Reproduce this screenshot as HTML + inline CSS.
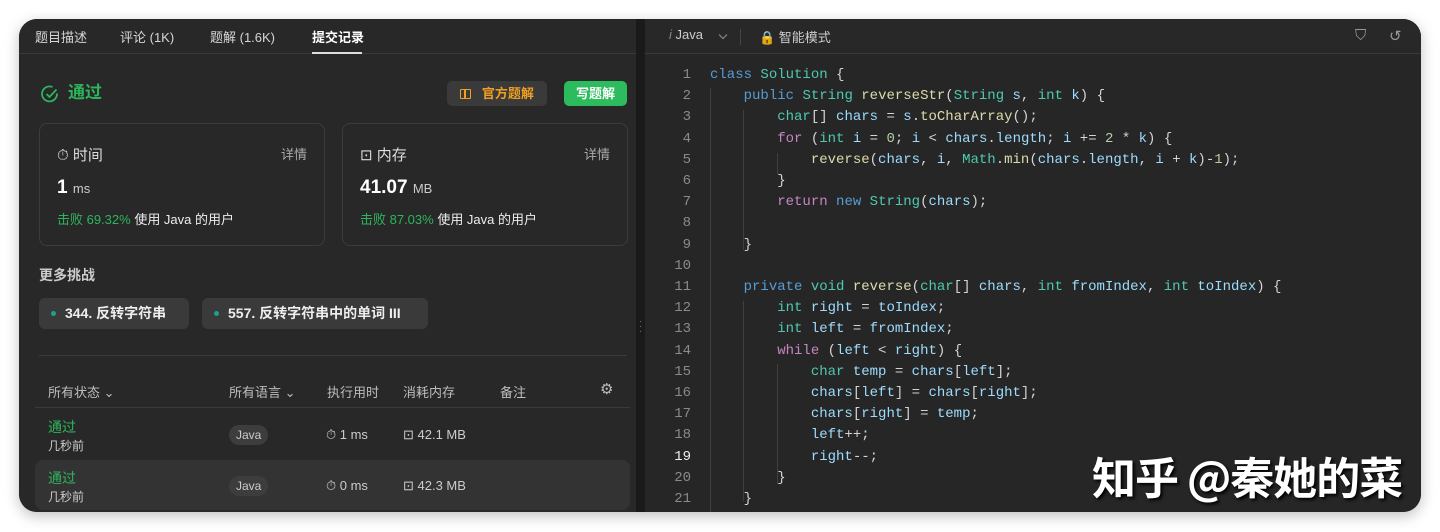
<!DOCTYPE html>
<html><head><meta charset="utf-8"><style>
*{box-sizing:border-box;margin:0;padding:0}
body{width:1440px;height:532px;background:#fff;overflow:hidden;font-family:"Liberation Sans","Noto Sans CJK SC",sans-serif;position:relative}
.win{position:absolute;left:19px;top:19px;width:1402px;height:493px;border-radius:18px;background:#1a1a1a;overflow:hidden;box-shadow:0 4px 14px rgba(0,0,0,.25)}
.lp{position:absolute;left:0;top:0;width:617px;height:493px;background:#282828}
.rp{position:absolute;left:626px;top:0;width:776px;height:493px;background:#262626}
.tabs{height:35px;border-bottom:1px solid #3a3a3a;position:relative;font-size:13px;color:#d6d6d6}
.tabs span{position:absolute;top:8px;white-space:nowrap}
.abs{position:absolute;white-space:nowrap}
.card{position:absolute;border:1px solid #3c3c3c;border-radius:8px;width:286px;height:123px;top:104px}
.g{color:#2db55d}
.code{position:absolute;left:0;top:46px;font-family:"Liberation Mono",monospace;font-size:14px;line-height:21.2px;color:#d4d4d4;white-space:pre}
.ln{position:absolute;left:0;width:46px;text-align:right;color:#8a8a8a}
.cl{position:absolute;left:65px}
.k{color:#569cd6}.t{color:#4ec9b0}.c{color:#c586c0}.f{color:#dcdcaa}.v{color:#9cdcfe}.n{color:#b5cea8}
.guide{position:absolute;width:1px;background:#404040}
.pill{position:absolute;background:#3a3a3a;border-radius:6px;color:#eee;font-size:14px;font-weight:bold;height:31px;line-height:31px;padding-left:26px}
.pill:before{content:"";position:absolute;left:12px;top:13px;width:5px;height:5px;border-radius:50%;background:#1aa38a}
.th{position:absolute;top:363px;font-size:13px;color:#bdbdbd}
.row{position:absolute;left:16px;width:595px;height:50px;border-radius:8px}
.jv{position:absolute;background:#3d3d3d;color:#ccc;font-size:12px;border-radius:10px;padding:3px 7px}
</style></head><body>
<div class="win">
 <div class="lp">
  <div class="tabs"><span style="left:16px">题目描述</span><span style="left:101px">评论 (1K)</span><span style="left:191px">题解 (1.6K)</span><span style="left:293px;color:#fff;font-weight:bold">提交记录</span>
   <div class="abs" style="left:293px;top:33px;width:50px;height:2px;background:#ddd"></div></div>
  <svg class="abs" style="left:21px;top:65px" width="20" height="20" viewBox="0 0 20 20"><path d="M17 9.5A7.5 7.5 0 1 1 12.5 3" fill="none" stroke="#2db55d" stroke-width="1.8"/><path d="M6.5 10l3 3 7-7.5" fill="none" stroke="#2db55d" stroke-width="1.8"/></svg>
  <div class="abs g" style="left:49px;top:63px;font-size:17px;font-weight:bold;line-height:22px">通过</div>
  <div class="abs" style="left:428px;top:62px;width:100px;height:25px;background:#3a3a3a;border-radius:5px;color:#f0a020;font-size:13px;font-weight:bold;line-height:25px;padding-left:13px"><span style="display:inline-block;width:11px;height:10px;border:1.5px solid #f0a020;border-radius:1px;vertical-align:-1px;position:relative"><span style="position:absolute;left:3px;top:-1px;width:1.5px;height:9px;background:#f0a020"></span></span>&nbsp;&nbsp; 官方题解</div>
  <div class="abs" style="left:545px;top:62px;width:63px;height:25px;background:#2cbb5d;border-radius:5px;color:#fff;font-size:13px;font-weight:bold;line-height:25px;text-align:center">写题解</div>
  <div class="card" style="left:20px">
   <div class="abs" style="left:17px;top:20px;color:#ddd;font-size:15px">⏱ 时间</div>
   <div class="abs" style="right:17px;top:20px;color:#aaa;font-size:13px">详情</div>
   <div class="abs" style="left:17px;top:53px;color:#fff;font-size:19px;font-weight:bold">1 <span style="font-size:13px;font-weight:normal;color:#ccc">ms</span></div>
   <div class="abs" style="left:17px;top:85px;font-size:13px;color:#eee"><span class="g">击败 69.32%</span> 使用 Java 的用户</div>
  </div>
  <div class="card" style="left:323px">
   <div class="abs" style="left:17px;top:20px;color:#ddd;font-size:15px">⊡ 内存</div>
   <div class="abs" style="right:17px;top:20px;color:#aaa;font-size:13px">详情</div>
   <div class="abs" style="left:17px;top:53px;color:#fff;font-size:19px;font-weight:bold">41.07 <span style="font-size:13px;font-weight:normal;color:#ccc">MB</span></div>
   <div class="abs" style="left:17px;top:85px;font-size:13px;color:#eee"><span class="g">击败 87.03%</span> 使用 Java 的用户</div>
  </div>
  <div class="abs" style="left:20px;top:246px;color:#ccc;font-size:14px;font-weight:bold">更多挑战</div>
  <div class="pill" style="left:20px;top:279px;width:150px">344. 反转字符串</div>
  <div class="pill" style="left:183px;top:279px;width:226px">557. 反转字符串中的单词 III</div>
  <div class="abs" style="left:20px;top:336px;width:588px;height:1px;background:#3a3a3a"></div>
  <div class="th" style="left:29px">所有状态 ⌄</div><div class="th" style="left:210px">所有语言 ⌄</div><div class="th" style="left:308px">执行用时</div><div class="th" style="left:384px">消耗内存</div><div class="th" style="left:481px">备注</div><div class="th" style="left:581px;font-size:15px;top:361px">⚙</div>
  <div class="abs" style="left:16px;top:388px;width:595px;height:1px;background:#3a3a3a"></div>
  <div class="row" style="top:390px"></div>
  <div class="row" style="top:441px;background:#333"></div>
  <div class="abs g" style="left:29px;top:398px;font-size:14px">通过</div><div class="abs" style="left:29px;top:418px;font-size:12px;color:#ccc">几秒前</div>
  <div class="jv" style="left:210px;top:406px">Java</div><div class="abs" style="left:307px;top:408px;font-size:13px;color:#ccc">⏱ 1 ms</div><div class="abs" style="left:384px;top:408px;font-size:13px;color:#ccc">⊡ 42.1 MB</div>
  <div class="abs g" style="left:29px;top:449px;font-size:14px">通过</div><div class="abs" style="left:29px;top:469px;font-size:12px;color:#ccc">几秒前</div>
  <div class="jv" style="left:210px;top:457px">Java</div><div class="abs" style="left:307px;top:459px;font-size:13px;color:#ccc">⏱ 0 ms</div><div class="abs" style="left:384px;top:459px;font-size:13px;color:#ccc">⊡ 42.3 MB</div>
 </div>
 <div class="abs" style="left:620px;top:300px;color:#777;font-size:10px;line-height:5px">·<br>·<br>·</div>
 <div class="rp">
  <div class="tabs" style="background:#282828"><span style="left:24px;color:#ccc"><i style="color:#888">i</i> Java</span>
   <svg class="abs" style="left:73px;top:14px" width="10" height="7" viewBox="0 0 10 7"><path d="M1 1.5l4 4 4-4" fill="none" stroke="#888" stroke-width="1.2"/></svg>
   <div class="abs" style="left:95px;top:10px;width:1px;height:16px;background:#444"></div>
   <span style="left:114px;color:#ccc">🔒 智能模式</span>
   <span style="left:710px;color:#999;font-size:15px">⛉</span><span style="left:744px;color:#999;font-size:15px">↺</span></div>
  <div class="guide" style="left:65px;top:69px;height:424px"></div>
  <div class="guide" style="left:98px;top:91px;height:140px"></div>
  <div class="guide" style="left:98px;top:282px;height:200px"></div>
  <div class="guide" style="left:132px;top:134px;height:21px"></div>
  <div class="guide" style="left:132px;top:345px;height:120px"></div>
  <div class="code"><div class="ln">1
2
3
4
5
6
7
8
9
10
11
12
13
14
15
16
17
18
<span style="color:#eee">19</span>
20
21</div><div class="cl"><span class="k">class</span> <span class="t">Solution</span> {
    <span class="k">public</span> <span class="t">String</span> <span class="f">reverseStr</span>(<span class="t">String</span> <span class="v">s</span>, <span class="t">int</span> <span class="v">k</span>) {
        <span class="t">char</span>[] <span class="v">chars</span> = <span class="v">s</span>.<span class="f">toCharArray</span>();
        <span class="c">for</span> (<span class="t">int</span> <span class="v">i</span> = <span class="n">0</span>; <span class="v">i</span> &lt; <span class="v">chars</span>.<span class="v">length</span>; <span class="v">i</span> += <span class="n">2</span> * <span class="v">k</span>) {
            <span class="f">reverse</span>(<span class="v">chars</span>, <span class="v">i</span>, <span class="t">Math</span>.<span class="f">min</span>(<span class="v">chars</span>.<span class="v">length</span>, <span class="v">i</span> + <span class="v">k</span>)-<span class="n">1</span>);
        }
        <span class="c">return</span> <span class="k">new</span> <span class="t">String</span>(<span class="v">chars</span>);

    }

    <span class="k">private</span> <span class="t">void</span> <span class="f">reverse</span>(<span class="t">char</span>[] <span class="v">chars</span>, <span class="t">int</span> <span class="v">fromIndex</span>, <span class="t">int</span> <span class="v">toIndex</span>) {
        <span class="t">int</span> <span class="v">right</span> = <span class="v">toIndex</span>;
        <span class="t">int</span> <span class="v">left</span> = <span class="v">fromIndex</span>;
        <span class="c">while</span> (<span class="v">left</span> &lt; <span class="v">right</span>) {
            <span class="t">char</span> <span class="v">temp</span> = <span class="v">chars</span>[<span class="v">left</span>];
            <span class="v">chars</span>[<span class="v">left</span>] = <span class="v">chars</span>[<span class="v">right</span>];
            <span class="v">chars</span>[<span class="v">right</span>] = <span class="v">temp</span>;
            <span class="v">left</span>++;
            <span class="v">right</span>--;
        }
    }</div></div>
  <div class="abs" style="left:447px;top:424px;font-size:44px;color:#fff;font-family:'Noto Sans CJK SC',sans-serif;font-weight:bold;text-shadow:2px 2px 3px #000;letter-spacing:-1px">知乎 @秦她的菜</div>
 </div>
</div>
</body></html>
